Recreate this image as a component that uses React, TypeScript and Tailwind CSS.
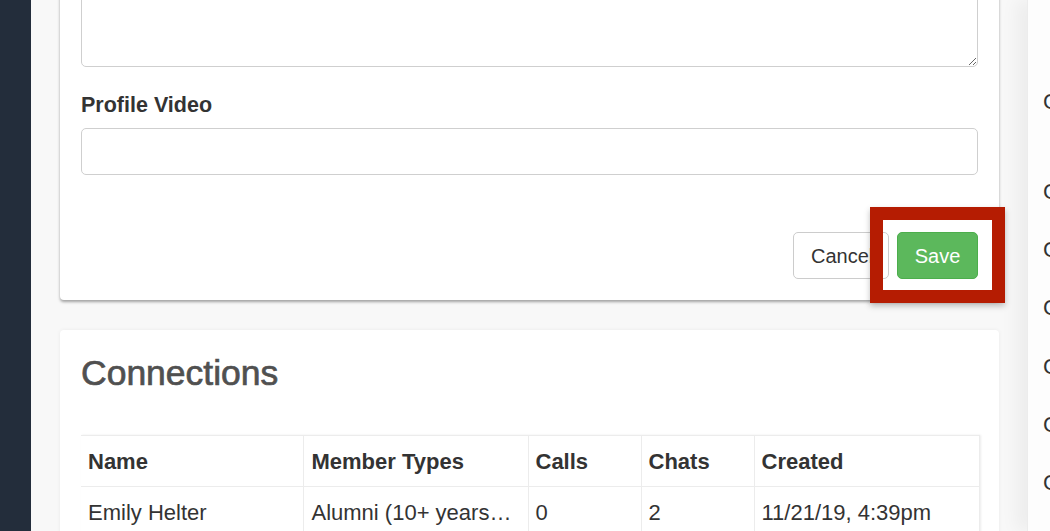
import React from "react";

const rows = [
  { name: "Emily Helter", types: "Alumni (10+ years…", calls: "0", chats: "2", created: "11/21/19, 4:39pm" },
];

const sideLines = [102, 192, 250, 308, 367, 425, 483];

export default function App() {
  return (
    <div className="flex h-[531px] w-[1050px] overflow-hidden bg-[#f8f8f8] font-['Liberation_Sans',Arial,sans-serif] text-[#333]">
      {/* Sidebar */}
      <aside className="w-[31px] shrink-0 bg-[#232d3b]" />

      {/* Main column */}
      <main className="ml-[29px] -mt-[60px] flex w-[939px] shrink-0 flex-col gap-[30px]">
        {/* Edit form card */}
        <section className="rounded-b-[4px] bg-white px-[21px] pt-[20px] pb-[21px] shadow-[0_2px_3px_rgba(0,0,0,0.35)]">
          <textarea className="block h-[107px] w-full rounded-[5px] border border-[#cfcfcf] bg-white" />
          <label className="mt-[25px] block text-[21.5px] font-bold leading-[26px] text-[#333]">
            Profile Video
          </label>
          <input
            type="text"
            className="mt-[10px] block h-[47px] w-full rounded-[5px] border border-[#cfcfcf] bg-white px-3 outline-none"
          />
          <div className="mt-[57px] flex justify-end gap-[8px]">
            <button className="h-[47px] w-[96px] rounded-[5px] border border-[#ccc] bg-white pl-[17px] text-left text-[20px] text-[#333]">
              Cancel
            </button>
            <div className="relative">
              <button className="h-[47px] w-[81px] rounded-[5px] border border-[#4cae4c] bg-[#5cb85c] text-[20px] text-white">
                Save
              </button>
              {/* highlight annotation */}
              <div className="pointer-events-none absolute -left-[27px] -top-[25px] h-[96px] w-[135px] border-[13px] border-[#b51c02] shadow-[0_3px_6px_rgba(0,0,0,0.25)]" />
            </div>
          </div>
        </section>

        {/* Connections card */}
        <section className="rounded-[4px] bg-white px-[21px] pt-[22px] pb-[20px] shadow-[0_0_4px_rgba(0,0,0,0.06)]">
          <h2 className="text-[35.5px] leading-[43px] text-[#505050] [-webkit-text-stroke:0.7px_#505050]">
            Connections
          </h2>
          <table className="mt-[40px] w-[898px] table-fixed border-collapse text-[22px] shadow-[1px_0_2px_rgba(0,0,0,0.08)]">
            <colgroup>
              <col className="w-[222px]" />
              <col className="w-[225px]" />
              <col className="w-[113px]" />
              <col className="w-[113px]" />
              <col className="w-[225px]" />
            </colgroup>
            <thead>
              <tr className="h-[51px] border-t border-b border-[#ececec]">
                <th className="border-r border-[#ececec] px-[7px] text-left font-bold">Name</th>
                <th className="border-r border-[#ececec] px-[8px] text-left font-bold">Member Types</th>
                <th className="border-r border-[#ececec] px-[7px] text-left font-bold">Calls</th>
                <th className="border-r border-[#ececec] px-[7px] text-left font-bold">Chats</th>
                <th className="border-r border-[#ececec] px-[7px] text-left font-bold">Created</th>
              </tr>
            </thead>
            <tbody>
              {rows.map((r, i) => (
                <tr key={i} className="h-[51px] border-b border-[#ececec]">
                  <td className="border-r border-[#ececec] px-[7px]">{r.name}</td>
                  <td className="whitespace-nowrap border-r border-[#ececec] px-[8px]">{r.types}</td>
                  <td className="border-r border-[#ececec] px-[7px]">{r.calls}</td>
                  <td className="border-r border-[#ececec] px-[7px]">{r.chats}</td>
                  <td className="border-r border-[#ececec] px-[7px]">{r.created}</td>
                </tr>
              ))}
            </tbody>
          </table>
        </section>
      </main>

      {/* Right panel (cut off) */}
      <div className="relative ml-[28px] flex-1 border-l border-[#ececec] bg-[#fdfdfd] shadow-[-10px_0_18px_rgba(0,0,0,0.05)]">
        {sideLines.map((y) => (
          <div
            key={y}
            className="absolute left-[15px] text-[22px] leading-[26px] text-[#333]"
            style={{ top: y - 13 }}
          >
            Contact
          </div>
        ))}
      </div>
    </div>
  );
}
